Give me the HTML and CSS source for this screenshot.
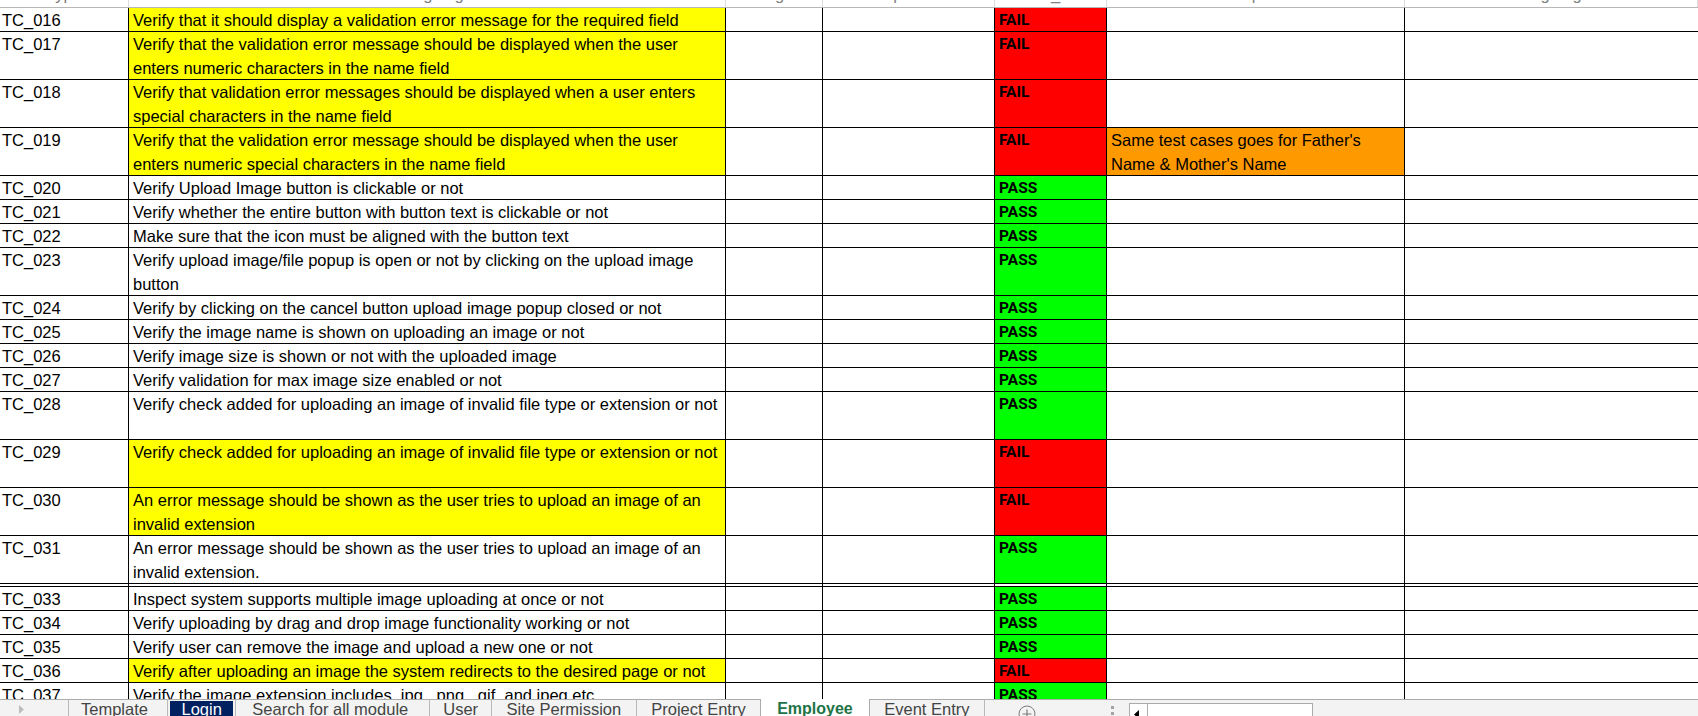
FILE: index.html
```html
<!DOCTYPE html>
<html lang="en">
<head>
    <meta charset="UTF-8">
    <title>Employee - test cases</title>
    <link rel="stylesheet" href="styles.css">
</head>
<body>
<div class="colHeads">
    <div><span>Type</span></div>
    <div><span>Designing</span></div>
    <div><span>Page</span></div>
    <div><span>Expected</span></div>
    <div><span>Pass_Fail</span></div>
    <div><span>Report</span></div>
    <div><span>Bug Log</span></div>
</div>

<div class="sheet">
    <div class="row">
        <div class="id">TC_016</div><div class="hl">Verify that it should display a validation error message for the required field</div><div></div><div></div><div class="fail">FAIL</div><div></div><div></div>
    </div>
    <div class="row tall">
        <div class="id">TC_017</div><div class="hl">Verify that the validation error message should be displayed when the user<br>enters numeric characters in the name field</div><div></div><div></div><div class="fail">FAIL</div><div></div><div></div>
    </div>
    <div class="row tall">
        <div class="id">TC_018</div><div class="hl">Verify that validation error messages should be displayed when a user enters<br>special characters in the name field</div><div></div><div></div><div class="fail">FAIL</div><div></div><div></div>
    </div>
    <div class="row tall">
        <div class="id">TC_019</div><div class="hl">Verify that the validation error message should be displayed when the user<br>enters numeric special characters in the name field</div><div></div><div></div><div class="fail">FAIL</div><div class="note">Same test cases goes for Father's<br>Name &amp; Mother's Name</div><div></div>
    </div>
    <div class="row">
        <div class="id">TC_020</div><div>Verify Upload Image button is clickable or not</div><div></div><div></div><div class="pass">PASS</div><div></div><div></div>
    </div>
    <div class="row">
        <div class="id">TC_021</div><div>Verify whether the entire button with button text is clickable or not</div><div></div><div></div><div class="pass">PASS</div><div></div><div></div>
    </div>
    <div class="row">
        <div class="id">TC_022</div><div>Make sure that the icon must be aligned with the button text</div><div></div><div></div><div class="pass">PASS</div><div></div><div></div>
    </div>
    <div class="row tall">
        <div class="id">TC_023</div><div>Verify upload image/file popup is open or not by clicking on the upload image<br>button</div><div></div><div></div><div class="pass">PASS</div><div></div><div></div>
    </div>
    <div class="row">
        <div class="id">TC_024</div><div>Verify by clicking on the cancel button upload image popup closed or not</div><div></div><div></div><div class="pass">PASS</div><div></div><div></div>
    </div>
    <div class="row">
        <div class="id">TC_025</div><div>Verify the image name is shown on uploading an image or not</div><div></div><div></div><div class="pass">PASS</div><div></div><div></div>
    </div>
    <div class="row">
        <div class="id">TC_026</div><div>Verify image size is shown or not with the uploaded image</div><div></div><div></div><div class="pass">PASS</div><div></div><div></div>
    </div>
    <div class="row">
        <div class="id">TC_027</div><div>Verify validation for max image size enabled or not</div><div></div><div></div><div class="pass">PASS</div><div></div><div></div>
    </div>
    <div class="row tall">
        <div class="id">TC_028</div><div>Verify check added for uploading an image of invalid file type or extension or not</div><div></div><div></div><div class="pass">PASS</div><div></div><div></div>
    </div>
    <div class="row tall">
        <div class="id">TC_029</div><div class="hl">Verify check added for uploading an image of invalid file type or extension or not</div><div></div><div></div><div class="fail">FAIL</div><div></div><div></div>
    </div>
    <div class="row tall">
        <div class="id">TC_030</div><div class="hl">An error message should be shown as the user tries to upload an image of an<br>invalid extension</div><div></div><div></div><div class="fail">FAIL</div><div></div><div></div>
    </div>
    <div class="row tall">
        <div class="id">TC_031</div><div>An error message should be shown as the user tries to upload an image of an<br>invalid extension.</div><div></div><div></div><div class="pass">PASS</div><div></div><div></div>
    </div>
    <!-- TC_032 row is hidden in the sheet -->
    <div class="row hidden">
        <div></div><div></div><div></div><div></div><div></div><div></div><div></div>
    </div>
    <div class="row">
        <div class="id">TC_033</div><div>Inspect system supports multiple image uploading at once or not</div><div></div><div></div><div class="pass">PASS</div><div></div><div></div>
    </div>
    <div class="row">
        <div class="id">TC_034</div><div>Verify uploading by drag and drop image functionality working or not</div><div></div><div></div><div class="pass">PASS</div><div></div><div></div>
    </div>
    <div class="row">
        <div class="id">TC_035</div><div>Verify user can remove the image and upload a new one or not</div><div></div><div></div><div class="pass">PASS</div><div></div><div></div>
    </div>
    <div class="row">
        <div class="id">TC_036</div><div class="hl">Verify after uploading an image the system redirects to the desired page or not</div><div></div><div></div><div class="fail">FAIL</div><div></div><div></div>
    </div>
    <div class="row">
        <div class="id">TC_037</div><div>Verify the image extension includes .jpg, .png, .gif, and jpeg etc</div><div></div><div></div><div class="pass">PASS</div><div></div><div></div>
    </div>
</div>

<div class="tabs">
    <div class="tabNav">
        <svg width="6" height="9" viewBox="0 0 6 9"><polygon points="0,0 5,4.5 0,9" fill="#bdbdbd"/></svg>
    </div>
    <div class="tab tabFirst">Template</div>
    <div class="tab tabColored"><span>Login</span></div>
    <div class="tab tabWide">Search for all module</div>
    <div class="tab tabNarrow">User</div>
    <div class="tab">Site Permission</div>
    <div class="tab tabBeforeActive">Project Entry</div>
    <div class="tab tabActive">Employee</div>
    <div class="tab">Event Entry</div>
    <div class="addSheet">
        <svg width="18" height="18" viewBox="0 0 18 18">
            <circle cx="9" cy="9" r="8" fill="none" stroke="#7b7b7b" stroke-width="1"/>
            <path d="M9 4.5v9M4.5 9h9" stroke="#7b7b7b" stroke-width="1.2"/>
        </svg>
    </div>
    <div class="splitter">
        <svg width="3" height="10" viewBox="0 0 3 10"><rect x="0" y="0" width="3" height="3" fill="#a3a3a3"/><rect x="0" y="6" width="3" height="3" fill="#a3a3a3"/></svg>
    </div>
    <div class="hScroll">
        <div class="hScrollLeft">
            <svg width="5" height="9" viewBox="0 0 5 9"><polygon points="5,0 0,4.5 5,9" fill="#000"/></svg>
        </div>
        <div class="hScrollTrack"></div>
    </div>
</div>
</body>
</html>
```
FILE: styles.css
```css
* {
    box-sizing: border-box;
}
body {
    margin: 0;
    padding: 0;
    width: 1698px;
    height: 716px;
    overflow: hidden;
    display: flex;
    flex-direction: column;
    background-color: #fff;
    font-family: "Liberation Sans", Arial, sans-serif;
    font-size: 16.5px;
    color: #000;
}

/* bottom of the frozen header row */
.colHeads {
    flex: none;
    display: grid;
    grid-template-columns: 129px 597px 97px 172px 112px 298px 1fr;
    height: 8px;
    border-bottom: 1px solid #b7b7b7;
}
.colHeads div {
    height: 7px;
    overflow: hidden;
    border-right: 1px solid #dadada;
    text-align: center;
    color: #7f7f7f;
}
.colHeads span {
    display: block;
    margin-top: -15px;
    line-height: 18px;
}

.sheet {
    flex: 1;
    overflow: hidden;
}
.row {
    display: grid;
    grid-template-columns: 129px 597px 97px 172px 112px 298px 1fr;
    height: 24px;
}
.row.tall {
    height: 48px;
}
.row.hidden {
    height: 3px;
}
.row > div {
    border-right: 1px solid #000;
    border-bottom: 1px solid #000;
    padding-left: 4px;
    line-height: 24px;
    white-space: nowrap;
    overflow: hidden;
}
.row > div:last-child {
    border-right: 0;
}
.row > .id {
    padding-left: 2px;
}
.row > .hl {
    background-color: #ffff00;
}
.row > .fail,
.row > .pass {
    font-family: Roboto, "Liberation Sans", Arial, sans-serif;
    font-weight: bold;
    font-size: 15.5px;
}
.row > .fail {
    background-color: #ff0000;
}
.row > .pass {
    background-color: #00ff00;
}
.row > .note {
    background-color: #ff9900;
}

/* sheet tabs */
.tabs {
    flex: none;
    height: 17px;
    display: flex;
    overflow: hidden;
    background: #f3f3f3 linear-gradient(#ababab, #ababab) top / 100% 1px no-repeat;
    color: #444;
}
.tabNav {
    width: 69px;
    padding: 6px 0 0 19px;
    border-right: 1px solid #b9b9b9;
}
.tabNav svg {
    display: block;
}
.tab {
    height: 17px;
    padding: 1px 14.5px 0;
    line-height: 18px;
    white-space: nowrap;
    border-right: 1px solid #b9b9b9;
}
.tabFirst {
    padding: 1px 19px 0 12px;
}
.tabWide {
    padding: 1px 21px 0 16px;
}
.tabNarrow {
    padding: 1px 13px 0;
}
.tabBeforeActive {
    border-right: 0;
}
.tabColored {
    padding: 2px 2px 0;
}
.tabColored span {
    display: block;
    height: 15px;
    padding: 0 11.5px;
    line-height: 16px;
    background-color: #002060;
    color: #fff;
}
.tabActive {
    padding: 0 16px;
    line-height: 20px;
    background-color: #fff;
    border-left: 1px solid #ababab;
    border-right: 1px solid #ababab;
    color: #217346;
    font-weight: bold;
    font-size: 16px;
}
.addSheet {
    width: 84px;
    padding-top: 6px;
    display: flex;
    justify-content: center;
}
.addSheet svg {
    display: block;
}
.splitter {
    margin-left: 42px;
    padding-top: 7px;
}
.splitter svg {
    display: block;
}
.hScroll {
    margin: 4px 0 0 15px;
    width: 184px;
    height: 16px;
    display: flex;
    border: 1px solid #ababab;
    border-bottom: 0;
    background-color: #fff;
}
.hScrollLeft {
    width: 18px;
    padding: 6px 0 0 4px;
    border-right: 1px solid #ababab;
}
.hScrollLeft svg {
    display: block;
}
.hScrollTrack {
    flex: 1;
}
```
